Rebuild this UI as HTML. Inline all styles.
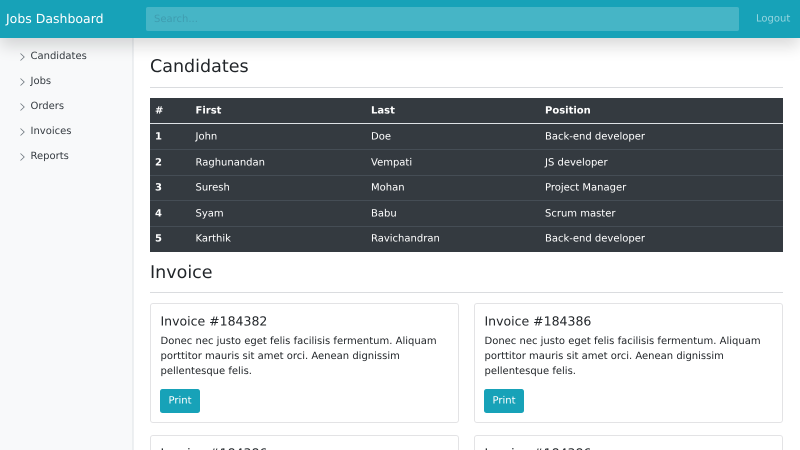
<!DOCTYPE html>
<html><head><meta charset="utf-8">
<style>
*{box-sizing:border-box}
html,body{margin:0;padding:0;width:800px;height:450px;overflow:hidden;background:#fff}
body{font-family:"DejaVu Sans",sans-serif;color:#212529;position:relative;text-rendering:geometricPrecision}
#outer{position:absolute;left:0;top:0;width:800px;height:450px;overflow:hidden;filter:blur(.3px)}
#root{position:absolute;left:0;top:0;width:800px;height:450px;overflow:hidden;zoom:2;transform:scale(.5);transform-origin:0 0}
.abs,.abs *{white-space:nowrap}
.abs{position:absolute}
#nav{left:0;top:0;width:800px;height:38px;background:#17a2b8;box-shadow:0 8px 16px rgba(0,0,0,.15);z-index:5}
#brand{left:6px;top:10px;font-size:12.5px;line-height:18px;color:#fff}
#search{left:146px;top:7px;width:593px;height:24px;background:#46b5c6;border-radius:2px;font-size:10px;line-height:23px;padding-left:8px;color:#3f9db0}
#logout{left:756px;top:9.5px;font-size:10px;line-height:17px;color:rgba(255,255,255,.55)}
#side{left:0;top:38px;width:133.5px;height:412px;background:#f8f9fa;border-right:1px solid #dee2e6}
.si{left:30.5px;font-size:10px;line-height:17px;color:#343a40}
.ch{left:20px;width:5px;height:8px}
h2{margin:0;font-weight:400;font-size:17.5px;line-height:23px;position:absolute;left:150px}
.hr{left:150px;width:633px;height:1px;background:#dadcdf}
#tbl{left:150px;top:98px;width:633px;height:154px;background:#343a40}
.row{left:0;width:633px;height:1px;background:#454d55}
.c{font-size:10px;line-height:16px;color:#fff}
.b{font-weight:700}
.card{width:309px;height:120px;border:1px solid #e3e3e5;border-radius:3px;background:#fff}
.t{left:9.5px;top:9.5px;font-size:12.5px;line-height:16px;color:#212529}
.p{left:9.5px;top:29px;font-size:10px;line-height:15px;color:#212529}
.btn{left:9px;top:85px;width:40px;height:24px;background:#17a2b8;border-radius:2.5px;color:#fff;font-size:10px;line-height:22px;text-align:center}
</style></head><body>
<div id="outer"><div id="root">
<div class="abs" id="side"></div>
<div class="abs" id="nav"></div>
<div class="abs" id="brand" style="z-index:6">Jobs Dashboard</div>
<div class="abs" id="search" style="z-index:6">Search...</div>
<div class="abs" id="logout" style="z-index:6">Logout</div>

<svg class="abs ch" style="top:53px" viewBox="0 0 5 8"><path d="M.5 .5 L4.2 4 L.5 7.5" fill="none" stroke="#6c757d" stroke-width=".8"/></svg>
<svg class="abs ch" style="top:78px" viewBox="0 0 5 8"><path d="M.5 .5 L4.2 4 L.5 7.5" fill="none" stroke="#6c757d" stroke-width=".8"/></svg>
<svg class="abs ch" style="top:103px" viewBox="0 0 5 8"><path d="M.5 .5 L4.2 4 L.5 7.5" fill="none" stroke="#6c757d" stroke-width=".8"/></svg>
<svg class="abs ch" style="top:128px" viewBox="0 0 5 8"><path d="M.5 .5 L4.2 4 L.5 7.5" fill="none" stroke="#6c757d" stroke-width=".8"/></svg>
<svg class="abs ch" style="top:153px" viewBox="0 0 5 8"><path d="M.5 .5 L4.2 4 L.5 7.5" fill="none" stroke="#6c757d" stroke-width=".8"/></svg>
<div class="abs si" style="top:47px">Candidates</div>
<div class="abs si" style="top:72px">Jobs</div>
<div class="abs si" style="top:97px">Orders</div>
<div class="abs si" style="top:122px">Invoices</div>
<div class="abs si" style="top:147px">Reports</div>

<h2 style="top:55px">Candidates</h2>
<div class="abs hr" style="top:87px"></div>

<div class="abs" id="tbl">
<div class="abs row" style="top:25px;height:1px;background:#dee2e6"></div>
<div class="abs row" style="top:51px"></div>
<div class="abs row" style="top:77px"></div>
<div class="abs row" style="top:102px"></div>
<div class="abs row" style="top:128px"></div>
<div class="abs c b" style="left:5px;top:4px">#</div><div class="abs c b" style="left:45.5px;top:4px">First</div><div class="abs c b" style="left:221px;top:4px">Last</div><div class="abs c b" style="left:395px;top:4px">Position</div>
<div class="abs c b" style="left:5px;top:30px">1</div><div class="abs c" style="left:45.5px;top:30px">John</div><div class="abs c" style="left:221px;top:30px">Doe</div><div class="abs c" style="left:395px;top:30px">Back-end developer</div>
<div class="abs c b" style="left:5px;top:56px">2</div><div class="abs c" style="left:45.5px;top:56px">Raghunandan</div><div class="abs c" style="left:221px;top:56px">Vempati</div><div class="abs c" style="left:395px;top:56px">JS developer</div>
<div class="abs c b" style="left:5px;top:81px">3</div><div class="abs c" style="left:45.5px;top:81px">Suresh</div><div class="abs c" style="left:221px;top:81px">Mohan</div><div class="abs c" style="left:395px;top:81px">Project Manager</div>
<div class="abs c b" style="left:5px;top:107px">4</div><div class="abs c" style="left:45.5px;top:107px">Syam</div><div class="abs c" style="left:221px;top:107px">Babu</div><div class="abs c" style="left:395px;top:107px">Scrum master</div>
<div class="abs c b" style="left:5px;top:132px">5</div><div class="abs c" style="left:45.5px;top:132px">Karthik</div><div class="abs c" style="left:221px;top:132px">Ravichandran</div><div class="abs c" style="left:395px;top:132px">Back-end developer</div>
</div>

<h2 style="top:261px">Invoice</h2>
<div class="abs hr" style="top:292px"></div>

<div class="abs card" style="left:150px;top:303px">
<div class="abs t">Invoice #184382</div>
<div class="abs p">Donec nec justo eget felis facilisis fermentum. Aliquam<br>porttitor mauris sit amet orci. Aenean dignissim<br>pellentesque felis.</div>
<div class="abs btn">Print</div>
</div>
<div class="abs card" style="left:474px;top:303px">
<div class="abs t">Invoice #184386</div>
<div class="abs p">Donec nec justo eget felis facilisis fermentum. Aliquam<br>porttitor mauris sit amet orci. Aenean dignissim<br>pellentesque felis.</div>
<div class="abs btn">Print</div>
</div>
<div class="abs card" style="left:150px;top:435px">
<div class="abs t">Invoice #184386</div>
</div>
<div class="abs card" style="left:474px;top:435px">
<div class="abs t">Invoice #184386</div>
</div>
</div></div>
</body></html>
